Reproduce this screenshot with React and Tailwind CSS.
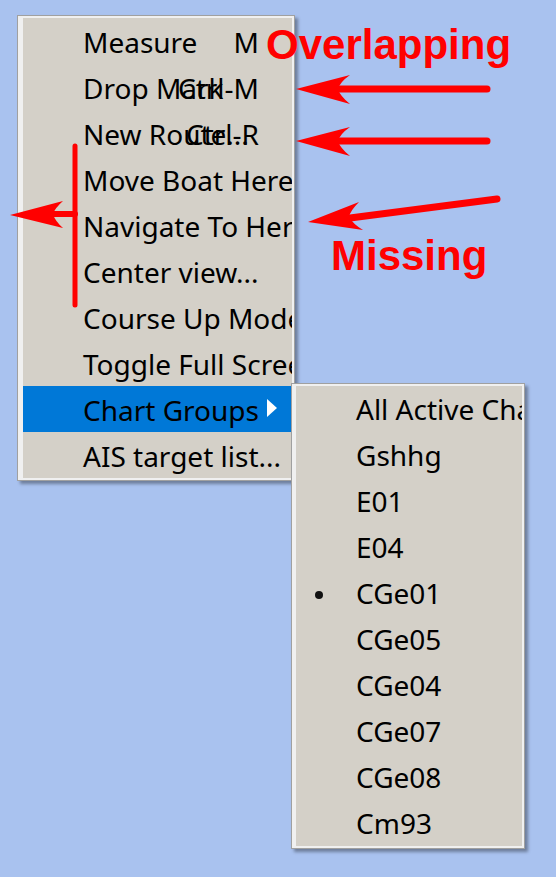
import React from "react";

const mainItems = [
  { label: "Measure", key: "M" },
  { label: "Drop Mark", key: "Ctrl-M" },
  { label: "New Route...", key: "Ctrl-R" },
  { label: "Move Boat Here" },
  { label: "Navigate To Here" },
  { label: "Center view..." },
  { label: "Course Up Mode" },
  { label: "Toggle Full Screen" },
  { label: "Chart Groups", sub: true, active: true },
  { label: "AIS target list..." },
];

const groups = [
  "All Active Charts",
  "Gshhg",
  "E01",
  "E04",
  "CGe01",
  "CGe05",
  "CGe04",
  "CGe07",
  "CGe08",
  "Cm93",
];

function MenuRow({ item }) {
  return (
    <div
      className={
        "grid h-[46px] items-center overflow-hidden whitespace-nowrap pl-[60px] leading-[48px] " +
        (item.active ? "bg-[#0078d7]" : "")
      }
    >
      <span className="col-start-1 row-start-1">{item.label}</span>
      {item.key && (
        <span className="col-start-1 row-start-1 mr-[33px] justify-self-end">{item.key}</span>
      )}
      {item.sub && (
        <svg
          className="col-start-1 row-start-1 mr-[15px] mb-[4px] justify-self-end"
          width="10"
          height="18"
          viewBox="0 0 10 18"
        >
          <path d="M0 0 L10 9 L0 18 Z" fill="#ffffff" />
        </svg>
      )}
    </div>
  );
}

function Annotations() {
  return (
    <>
      <div className="pointer-events-none absolute left-[266px] top-[24px] font-['Liberation_Sans',Arial,sans-serif] text-[42px] font-bold leading-[42px] text-[#ff0000]">
        Overlapping
      </div>
      <div className="pointer-events-none absolute left-[331px] top-[235px] font-['Liberation_Sans',Arial,sans-serif] text-[42px] font-bold leading-[42px] text-[#ff0000]">
        Missing
      </div>
      <svg className="pointer-events-none absolute inset-0" width="556" height="877" viewBox="0 0 556 877">
        <g stroke="#ff0000" strokeLinecap="round" fill="none">
          <line x1="487" y1="89" x2="338" y2="89" strokeWidth="7" />
          <line x1="487" y1="141" x2="338" y2="141" strokeWidth="7" />
          <line x1="497" y1="199" x2="350" y2="218" strokeWidth="7" />
          <line x1="75" y1="146" x2="75" y2="305" strokeWidth="5" />
          <line x1="75" y1="214" x2="52" y2="214" strokeWidth="6" />
        </g>
        <g fill="#ff0000">
          <path d="M296 89 L350 75 Q340 82 338 89 Q340 96 350 104 Z" />
          <path d="M296 141 L350 127 Q340 134 338 141 Q340 148 350 156 Z" />
          <path d="M308 222 L359 202 Q350 211 349 217 Q353 224 363 230 Z" />
          <path d="M10 215 L63 201 Q55 208 53 214 Q55 221 63 228 Z" />
        </g>
      </svg>
    </>
  );
}

export default function App() {
  return (
    <div className="relative min-h-screen w-full overflow-hidden bg-[#a9c2ef] pl-[17px] pt-[15px] font-['Noto_Sans','Open_Sans',sans-serif] text-[28px] text-black">
      <div className="w-[278px] border border-[#a0a0a0] bg-[#f0f0f0] pb-[2px] pl-[5px] pr-[2px] pt-[2px] shadow-[3px_3px_3px_rgba(0,0,0,0.35)]">
        <div className="bg-[#d4d0c8]">
          {mainItems.map((item) => (
            <MenuRow key={item.label} item={item} />
          ))}
        </div>
      </div>

      <div className="absolute left-[291px] top-[383px] w-[234px] border border-[#a0a0a0] bg-[#f0f0f0] pb-[2px] pl-[4px] pr-[2px] pt-[2px] shadow-[3px_3px_3px_rgba(0,0,0,0.35)]">
        <div className="bg-[#d4d0c8]">
          {groups.map((g, i) => (
            <div
              key={g}
              className="flex h-[46px] items-center overflow-hidden whitespace-nowrap leading-[48px]"
            >
              <div className="flex w-[60px] shrink-0 items-center pl-[19px]">
                {i === 4 && <span className="mt-[4px] block h-[8px] w-[8px] rounded-full bg-[#111]" />}
              </div>
              <span>{g}</span>
            </div>
          ))}
        </div>
      </div>

      <Annotations />
    </div>
  );
}
